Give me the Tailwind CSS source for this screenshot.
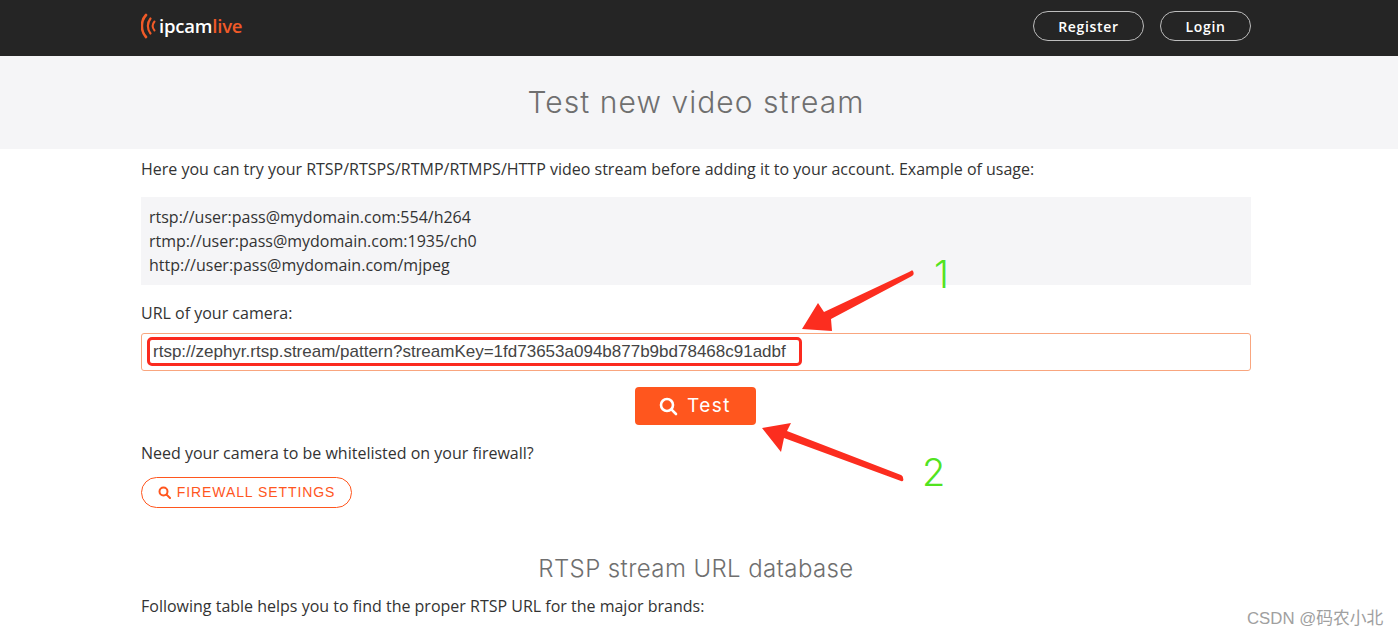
<!DOCTYPE html>
<html lang="en">
<head>
<meta charset="utf-8">
<title>Test new video stream</title>
<script src="https://cdn.jsdelivr.net/npm/@tailwindcss/browser@4"></script>
</head>
<body class="relative h-[637px] overflow-hidden bg-white font-['Open_Sans',sans-serif] text-[16px] text-[#333]">
<header class="h-14 bg-[#252525] pr-[6px]">
  <div class="mx-auto flex h-[52px] w-[1110px] items-center justify-between">
    <div class="flex items-center">
      <svg width="17" height="26" viewBox="0 0 17 26" fill="none" stroke="#f05a28" stroke-linecap="round">
        <path d="M5 2 C-0.5 8 -0.5 18 5 24" stroke-width="2.6"/>
        <path d="M9.5 5.5 C6 10 6 16 9.5 20.5" stroke-width="2.2"/>
        <path d="M13.5 8.5 C11 11.5 11 14.5 13.5 17.5" stroke-width="2"/>
      </svg>
      <span class="ml-[1px] text-[18.5px] font-semibold leading-none tracking-[-0.2px] text-white">ipcam<span class="text-[#f05a28]">live</span></span>
    </div>
    <nav class="flex gap-4">
      <a class="flex h-[30px] w-[111px] items-center justify-center rounded-full border border-[#bdbdbd] text-[14px] font-semibold tracking-[0.7px] text-white">Register</a>
      <a class="flex h-[30px] w-[91px] items-center justify-center rounded-full border border-[#bdbdbd] text-[14px] font-semibold tracking-[0.7px] text-white">Login</a>
    </nav>
  </div>
</header>
<section class="flex h-[93px] items-center justify-center bg-[#f5f5f7] pr-[6px]">
  <h1 class="font-['Inter',sans-serif] text-[30px] font-light tracking-[1.05px] text-[#6f6f6f]">Test new video stream</h1>
</section>
<div class="pr-[6px]">
<main class="mx-auto w-[1110px]">
  <p class="mt-2 text-[16px] leading-[24px]">Here you can try your RTSP/RTSPS/RTMP/RTMPS/HTTP video stream before adding it to your account. Example of usage:</p>
  <div class="mt-4 h-[88px] bg-[#f5f5f7] p-2 text-[16px] leading-[24px]">
    <div>rtsp://user:pass@mydomain.com:554/h264</div>
    <div>rtmp://user:pass@mydomain.com:1935/ch0</div>
    <div>http://user:pass@mydomain.com/mjpeg</div>
  </div>
  <label class="mt-4 block leading-[24px]">URL of your camera:</label>
  <div class="mt-2 flex h-[38px] items-center rounded-[3px] border border-[#f9a67f] pl-[11px] font-['Liberation_Sans',sans-serif] text-[17px] text-[#444]">rtsp://zephyr.rtsp.stream/pattern?streamKey=1fd73653a094b877b9bd78468c91adbf</div>
  <div class="mt-4 flex justify-center pr-[2px]">
    <button class="flex h-[38px] w-[121px] items-center justify-center gap-[9px] rounded-[4px] bg-[#ff561e] pt-[1px] font-['Inter',sans-serif] text-[19px] tracking-[1.5px] text-white">
      <svg width="19" height="19" viewBox="0 0 19 19" fill="none" stroke="white" stroke-width="2.6" stroke-linecap="round"><circle cx="8" cy="8" r="6"/><path d="M12.6 12.6 L17 17"/></svg>
      Test
    </button>
  </div>
  <p class="mt-4 leading-[24px]">Need your camera to be whitelisted on your firewall?</p>
  <button class="mt-3 flex h-[31px] w-[211px] items-center justify-center gap-[6px] rounded-full border border-[#ff561e] font-['Liberation_Sans',sans-serif] text-[14px] tracking-[0.93px] text-[#ff561e]">
    <svg width="13" height="13" viewBox="0 0 13 13" fill="none" stroke="#ff561e" stroke-width="2" stroke-linecap="round"><circle cx="5.5" cy="5.5" r="4"/><path d="M8.6 8.6 L12 12"/></svg>
    FIREWALL SETTINGS
  </button>
  <h2 class="mt-[43px] text-center font-['Inter',sans-serif] text-[24px] leading-[36px] font-light tracking-[0.4px] text-[#6f6f6f]">RTSP stream URL database</h2>
  <p class="mt-[7px] leading-[24px]">Following table helps you to find the proper RTSP URL for the major brands:</p>
</main>
</div>

<!-- screenshot annotations -->
<div class="absolute left-[147px] top-[337px] h-[29px] w-[655px] rounded-[5px] border-[3px] border-[#fb2a1f]"></div>
<svg class="absolute left-0 top-0" width="1398" height="637" fill="#fc2d1f" stroke="none">
  <path d="M913 271 C914 273 914 275 912 276 L831 319 L832 331 L802 329 L818 303 L824 312 L909 272 C911 271 912 270 913 271 Z"/>
  <path d="M903 478 C904 480 903 482 901 481 L784 438 L781 452 L762 428 L791 423 L787 431 L901 475 C902 476 903 476 903 478 Z"/>
</svg>
<span class="absolute left-[934px] top-[252px] font-['Inter',sans-serif] text-[38px] leading-[44px] font-light text-[#52e31f]">1</span>
<span class="absolute left-[922px] top-[450px] font-['Inter',sans-serif] text-[38px] leading-[44px] font-light text-[#52e31f]">2</span>
<span class="absolute left-[1247px] top-[607px] font-['Liberation_Sans','Noto_Sans_CJK_SC',sans-serif] text-[16.8px] leading-[24px] text-[#a0a0a0]">CSDN @码农小北</span>
</body>
</html>
